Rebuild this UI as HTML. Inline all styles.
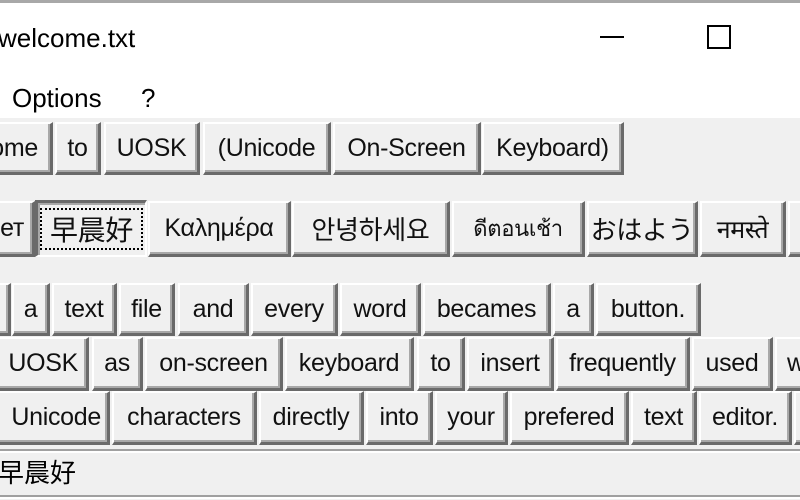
<!DOCTYPE html>
<html><head><meta charset="utf-8"><style>
body{margin:0;width:800px;height:500px;overflow:hidden;background:#f0f0f0;font-family:"Liberation Sans","Noto Sans CJK SC",sans-serif;position:relative}
.top{position:absolute;left:0;top:0;width:800px;height:118px;background:#fff;border-top:3px solid #a8a8a8;box-sizing:border-box}
.t{position:absolute;font-size:26px;color:#000;white-space:nowrap}
.b{position:absolute;box-sizing:border-box;background:#f0f0f0;border-top:2px solid #fff;border-left:2px solid #fff;border-right:3px solid #6a6a6a;border-bottom:3px solid #6a6a6a;box-shadow:inset -2px -2px 0 #a8a8a8;font-size:25px;color:#111;display:flex;align-items:center;justify-content:center;white-space:nowrap;overflow:hidden;letter-spacing:-0.3px}
.p{border-top:3px solid #6a6a6a;border-left:3px solid #6a6a6a;border-right:2px solid #fff;border-bottom:2px solid #fff;box-shadow:inset 2px 2px 0 #a8a8a8}
.p span{border:2px dotted #000;padding:0 8px;line-height:38px}
.hl{position:absolute;left:0;width:800px;height:0;border-top:2px solid #a0a0a0;border-bottom:2px solid #fff}
</style></head><body>
<div class="top"></div>
<div class="t" style="left:-2px;top:23px">welcome.txt</div>
<div style="position:absolute;left:600px;top:36px;width:24px;height:2px;background:#000"></div>
<div style="position:absolute;left:707px;top:25px;width:20px;height:20px;border:2px solid #000"></div>
<div class="t" style="left:12px;top:83px">Options</div>
<div class="t" style="left:141px;top:83px">?</div>

<div class="b" style="left:-20px;top:122px;width:73px;height:53px;justify-content:flex-end;padding-right:12px">ome</div>
<div class="b" style="left:55px;top:122px;width:46px;height:53px">to</div>
<div class="b" style="left:104px;top:122px;width:96px;height:53px">UOSK</div>
<div class="b" style="left:203px;top:122px;width:128px;height:53px">(Unicode</div>
<div class="b" style="left:333px;top:122px;width:148px;height:53px">On-Screen</div>
<div class="b" style="left:482px;top:122px;width:142px;height:53px">Keyboard)</div>

<div class="b" style="left:-20px;top:201px;width:55px;height:56px;justify-content:flex-end;padding-right:8px">ет</div>
<div class="b p" style="left:35px;top:200px;width:112px;height:57px;font-family:'Noto Sans CJK SC',sans-serif;font-size:28px"><span>早晨好</span></div>
<div class="b" style="left:148px;top:201px;width:143px;height:56px">Καλημέρα</div>
<div class="b" style="left:292px;top:201px;width:158px;height:56px;font-family:'Noto Sans CJK KR',sans-serif;font-size:26px">안녕하세요</div>
<div class="b" style="left:452px;top:201px;width:133px;height:56px;font-family:'DejaVu Sans',sans-serif;font-size:22px">ดีตอนเช้า</div>
<div class="b" style="left:587px;top:201px;width:111px;height:56px;font-family:'Noto Sans CJK JP',sans-serif;font-size:26px">おはよう</div>
<div class="b" style="left:700px;top:201px;width:86px;height:56px;font-family:'DejaVu Sans',sans-serif">नमस्ते</div>
<div class="b" style="left:788px;top:201px;width:40px;height:56px"></div>

<div class="b" style="left:-20px;top:283px;width:31px;height:53px"></div>
<div class="b" style="left:12px;top:283px;width:38px;height:53px">a</div>
<div class="b" style="left:52px;top:283px;width:65px;height:53px">text</div>
<div class="b" style="left:119px;top:283px;width:56px;height:53px">file</div>
<div class="b" style="left:178px;top:283px;width:71px;height:53px">and</div>
<div class="b" style="left:251px;top:283px;width:87px;height:53px">every</div>
<div class="b" style="left:340px;top:283px;width:81px;height:53px">word</div>
<div class="b" style="left:423px;top:283px;width:128px;height:53px">becames</div>
<div class="b" style="left:553px;top:283px;width:41px;height:53px">a</div>
<div class="b" style="left:596px;top:283px;width:105px;height:53px">button.</div>

<div class="b" style="left:-20px;top:337px;width:109px;height:54px;justify-content:flex-end;padding-right:8px">UOSK</div>
<div class="b" style="left:92px;top:337px;width:51px;height:54px">as</div>
<div class="b" style="left:145px;top:337px;width:138px;height:54px">on-screen</div>
<div class="b" style="left:285px;top:337px;width:129px;height:54px">keyboard</div>
<div class="b" style="left:417px;top:337px;width:48px;height:54px">to</div>
<div class="b" style="left:467px;top:337px;width:87px;height:54px">insert</div>
<div class="b" style="left:556px;top:337px;width:134px;height:54px">frequently</div>
<div class="b" style="left:692px;top:337px;width:81px;height:54px">used</div>
<div class="b" style="left:775px;top:337px;width:60px;height:54px;justify-content:flex-start;padding-left:10px">w</div>

<div class="b" style="left:-20px;top:391px;width:130px;height:54px;justify-content:flex-end;padding-right:6px">Unicode</div>
<div class="b" style="left:112px;top:391px;width:145px;height:54px">characters</div>
<div class="b" style="left:259px;top:391px;width:105px;height:54px">directly</div>
<div class="b" style="left:366px;top:391px;width:67px;height:54px">into</div>
<div class="b" style="left:435px;top:391px;width:73px;height:54px">your</div>
<div class="b" style="left:510px;top:391px;width:119px;height:54px">prefered</div>
<div class="b" style="left:631px;top:391px;width:66px;height:54px">text</div>
<div class="b" style="left:699px;top:391px;width:93px;height:54px">editor.</div>
<div class="b" style="left:794px;top:391px;width:40px;height:54px"></div>

<div class="hl" style="top:449px"></div>
<div class="t" style="left:-2px;top:456px;font-family:'Noto Sans CJK SC',sans-serif;font-size:26px;line-height:32px">早晨好</div>
<div class="hl" style="top:495px"></div>
</body></html>
